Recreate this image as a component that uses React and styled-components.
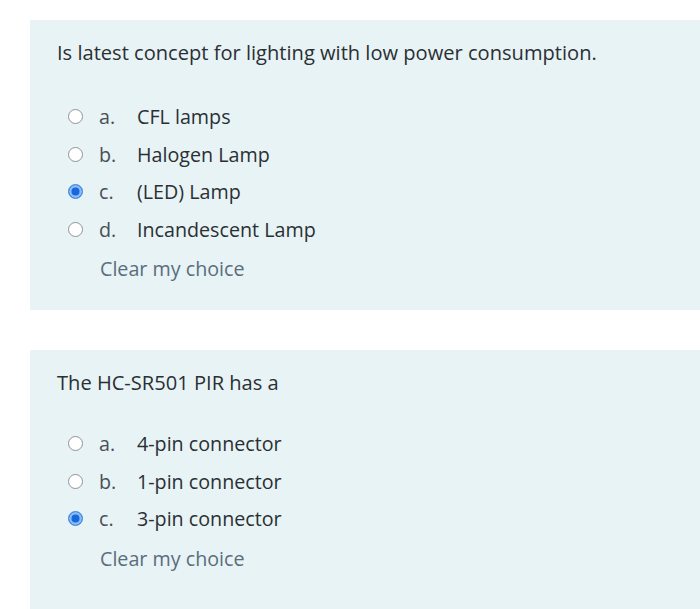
import React from 'react';
import styled, { createGlobalStyle } from 'styled-components';

const GlobalStyle = createGlobalStyle`
  html, body {
    margin: 0;
    padding: 0;
    background: #ffffff;
  }
  body {
    font-family: "Open Sans", "Noto Sans", sans-serif;
    color: #2b2f33;
  }
`;

const Page = styled.div`
  display: flex;
  flex-direction: column;
  gap: 40px;
  padding: 20px 0 0 30px;
  width: 670px;
`;

const Card = styled.div`
  background: #e7f3f5;
  height: ${(p) => p.$height}px;
  padding: 20px 0 0 27px;
  box-sizing: border-box;
`;

const Prompt = styled.div`
  font-size: 20.1px;
  line-height: 26px;
  color: #2b2f33;
  margin-bottom: ${(p) => p.$gap}px;
`;

const Options = styled.div`
  display: flex;
  flex-direction: column;
  padding-left: 11px;
`;

const Row = styled.label`
  display: flex;
  align-items: center;
  height: 37.5px;
  font-size: 19.7px;
  color: #2b2f33;
`;

const Radio = styled.span`
  width: 15px;
  height: 15px;
  border-radius: 50%;
  box-sizing: border-box;
  border: 1.5px solid ${(p) => (p.$checked ? '#4a90e6' : '#8f9499')};
  background: ${(p) => (p.$checked ? '#1668dc' : '#ffffff')};
  box-shadow: ${(p) =>
    p.$checked ? 'inset 0 0 0 2.5px #8dbcf0' : 'none'};
  margin-right: 16px;
  flex-shrink: 0;
`;

const Letter = styled.span`
  width: 38px;
  color: #4a4f55;
`;

const Clear = styled.div`
  padding-left: 32px;
  margin-top: 8px;
  font-size: 19.7px;
  line-height: 26px;
  color: #5b6d7c;
`;

const questions = [
  {
    text: 'Is latest concept for lighting with low power consumption.',
    height: 290,
    gap: 32,
    options: ['CFL lamps', 'Halogen Lamp', '(LED) Lamp', 'Incandescent Lamp'],
    checked: 2,
  },
  {
    text: 'The HC-SR501 PIR has a',
    height: 259,
    gap: 29,
    options: ['4-pin connector', '1-pin connector', '3-pin connector'],
    checked: 2,
  },
];

const letters = ['a.', 'b.', 'c.', 'd.'];

export default function App() {
  return (
    <>
      <GlobalStyle />
      <Page>
        {questions.map((q, qi) => (
          <Card key={qi} $height={q.height}>
            <Prompt $gap={q.gap}>{q.text}</Prompt>
            <Options>
              {q.options.map((o, i) => (
                <Row key={i}>
                  <Radio $checked={i === q.checked} />
                  <Letter>{letters[i]}</Letter>
                  {o}
                </Row>
              ))}
              <Clear>Clear my choice</Clear>
            </Options>
          </Card>
        ))}
      </Page>
    </>
  );
}
